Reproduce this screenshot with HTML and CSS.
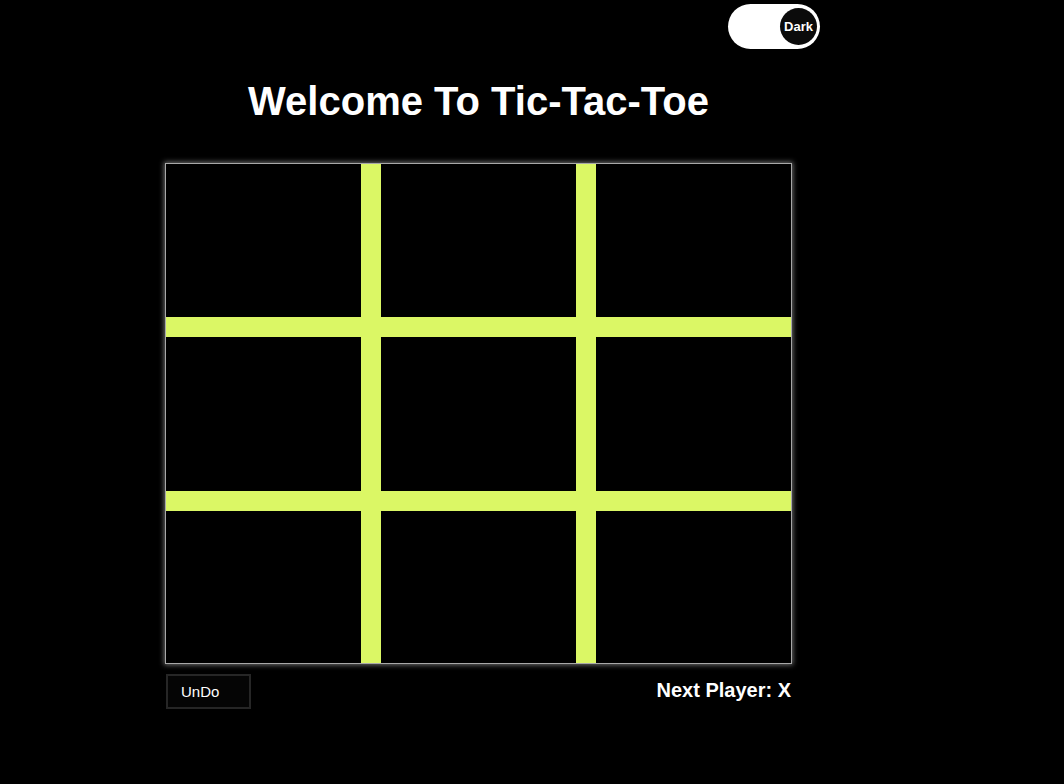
FILE: index.html
```html
<!DOCTYPE html>
<html lang="en">
<head>
<meta charset="utf-8">
<title>Tic-Tac-Toe</title>
<link rel="stylesheet" href="styles.css">
</head>
<body>
  <div class="topbar">
    <button class="toggle" type="button" aria-label="Toggle theme">
      <span class="knob">Dark</span>
    </button>
  </div>
  <main class="game">
    <h1 class="title">Welcome To Tic-Tac-Toe</h1>
    <div class="board">
      <div class="cell"></div>
      <div class="cell"></div>
      <div class="cell"></div>
      <div class="cell"></div>
      <div class="cell"></div>
      <div class="cell"></div>
      <div class="cell"></div>
      <div class="cell"></div>
      <div class="cell"></div>
    </div>
    <div class="footer">
      <button class="undo" type="button">UnDo</button>
      <div class="status">Next Player: X</div>
    </div>
  </main>
</body>
</html>
```

FILE: styles.css
```css
html, body {
  margin: 0;
  padding: 0;
  background: #000;
  color: #fff;
  font-family: "Liberation Sans", Arial, sans-serif;
}

.topbar {
  display: flex;
  justify-content: flex-end;
  width: 820px;
  padding-top: 4px;
}

.toggle {
  display: flex;
  justify-content: flex-end;
  align-items: center;
  width: 92px;
  height: 45px;
  padding: 0 3px 0 0;
  border: none;
  border-radius: 23px;
  background: #fff;
  cursor: pointer;
}

.knob {
  display: flex;
  align-items: center;
  justify-content: center;
  width: 37px;
  height: 37px;
  border-radius: 50%;
  background: #0b0b0b;
  color: #fff;
  font-family: "Liberation Sans", Arial, sans-serif;
  font-weight: bold;
  font-size: 13px;
}

.game {
  width: 627px;
  margin-left: 165px;
}

.title {
  margin: 29px 0 39px;
  text-align: center;
  font-size: 40px;
  font-weight: bold;
  line-height: 46px;
}

.board {
  display: grid;
  grid-template-columns: 195px 195px 195px;
  grid-template-rows: 153px 154px 152px;
  gap: 20px;
  background: #dbf765;
  border: 1px solid #a8a8a8;
  box-shadow: 0 0 5px 1px rgba(200, 200, 200, 0.55);
}

.cell {
  background: #000;
}

.footer {
  display: flex;
  justify-content: space-between;
  align-items: center;
  margin-top: 10px;
}

.undo {
  width: 85px;
  height: 35px;
  margin-left: 1px;
  padding: 0 0 0 13px;
  text-align: left;
  border: 2px solid #262626;
  background: #050505;
  color: #fff;
  font-family: "Liberation Sans", Arial, sans-serif;
  font-size: 15px;
}

.status {
  font-size: 20px;
  font-weight: bold;
  margin-top: -3px;
  margin-right: 1px;
}
```
